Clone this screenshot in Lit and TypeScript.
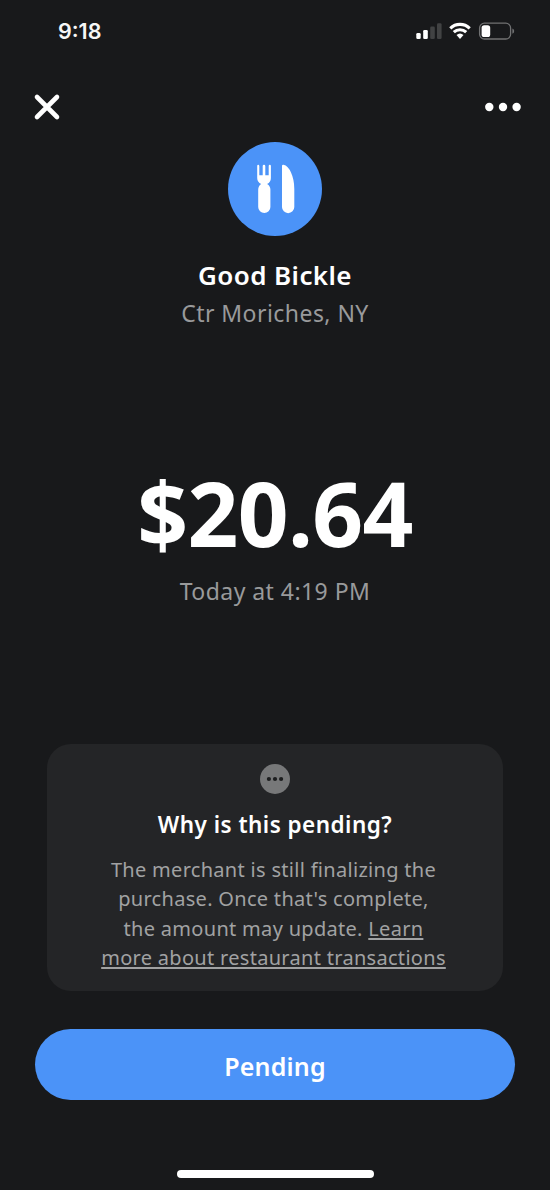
import { LitElement, html, css } from "lit";
import { customElement } from "lit/decorators.js";

@customElement("status-bar")
export class StatusBar extends LitElement {
  static styles = css`
    :host { display: flex; justify-content: space-between; height: 62px; box-sizing: border-box; padding: 19px 34px 0 58px; }
    .time { font: 600 21.5px/25px Inter, sans-serif; letter-spacing: 0; color: #f6f6f6; }
    .icons { display: block; width: 101px; height: 24px; }
  `;
  render() {
    return html`
      <span class="time">9:18</span>
      <svg class="icons" viewBox="0 0 101 24" fill="none">
        <rect x="1.3" y="14" width="4.4" height="6" rx="1.3" fill="#fff" />
        <rect x="8.2" y="11" width="4.6" height="9" rx="1.3" fill="#fff" />
        <rect x="15.2" y="7.6" width="4.6" height="12.4" rx="1.3" fill="#414243" />
        <rect x="22" y="4.2" width="4.6" height="15.8" rx="1.3" fill="#414243" />
        <g stroke="#fff" stroke-width="3.1">
          <path d="M35.3 9.3a14 14 0 0 1 19.400 0" />
          <path d="M38.800 13.200a9 9 0 0 1 12.400 0" />
        </g>
        <path d="M41.500 16a5.300 5.300 0 0 1 7 0l-3.500 4z" fill="#fff" />
        <rect x="64.600" y="4.200" width="31" height="15.800" rx="4.800" stroke="#717273" stroke-width="1.300" />
        <rect x="66.600" y="6.200" width="8.600" height="11.800" rx="2.600" fill="#fff" />
        <path d="M97.400 9.400q1.800.8 1.800 2.700t-1.800 2.700z" fill="#717273" />
      </svg>
    `;
  }
}

@customElement("pending-card")
export class PendingCard extends LitElement {
  static styles = css`
    :host { display: flex; flex-direction: column; align-items: center; box-sizing: border-box; height: 247px; padding-top: 20px; border-radius: 24px; background: #242527; text-align: center; }
    .badge { display: block; width: 30px; height: 30px; }
    .title { margin: 16px 0 0; font-size: 22.5px; line-height: 30px; font-weight: 600; letter-spacing: 0.47px; color: #fff; white-space: nowrap; }
    .copy { margin: 15px 0 0; padding-right: 3px; font-size: 20px; line-height: 29.3px; letter-spacing: 0.3px; color: #a1a2a3; white-space: nowrap; }
    .link { color: inherit; text-decoration: underline; text-decoration-thickness: 1.5px; text-underline-offset: 2px; text-decoration-skip-ink: none; }
  `;
  render() {
    return html`
      <svg class="badge" viewBox="0 0 30 30">
        <circle cx="15" cy="15" r="15" fill="#777879" />
        <g fill="#1c1d1e">
          <circle cx="8.9" cy="15" r="2.1" /><circle cx="15" cy="15" r="2.1" /><circle cx="21.1" cy="15" r="2.1" />
        </g>
      </svg>
      <h2 class="title">Why is this pending?</h2>
      <p class="copy">
        The merchant is still finalizing the<br />purchase. Once that's complete,<br />the amount may update.
        <a class="link">Learn<br />more about restaurant transactions</a>
      </p>
    `;
  }
}

@customElement("app-root")
export class AppRoot extends LitElement {
  static styles = css`
    :host { display: flex; flex-direction: column; width: 550px; height: 1190px; overflow: hidden; background: #18191b; font-family: "Noto Sans", sans-serif; }
    .nav { display: flex; justify-content: space-between; align-items: center; height: 80px; padding: 9px 28px 0 33px; box-sizing: border-box; }
    .nav svg { display: block; }
    .main { display: flex; flex-direction: column; align-items: center; white-space: nowrap; }
    .avatar { display: block; width: 94px; height: 94px; }
    .name { margin: 22px 0 0; font-size: 26px; line-height: 34px; font-weight: 600; letter-spacing: 0.4px; color: #fff; }
    .muted { font-size: 23px; line-height: 30px; color: #999a9b; letter-spacing: 0.45px; }
    .place { margin-top: 6px; }
    .amount { margin-top: 135px; font-size: 89px; line-height: 100px; font-weight: 700; letter-spacing: -0.7px; color: #fff; }
    .date { margin-top: 13px; }
    .card { margin: 138px 47px 0; }
    .button { margin: 38px 35px 0; height: 71px; padding: 2px 0 0; border: 0; border-radius: 36px; background: #4b93f8; color: #fff; font: 600 25px/34px "Noto Sans", sans-serif; letter-spacing: 0.2px; }
    .home { width: 197px; height: 8px; margin: 70px auto 0; border-radius: 4px; background: #fff; }
  `;
  render() {
    return html`
      <status-bar></status-bar>
      <div class="nav">
        <svg width="28" height="28" viewBox="0 0 28 28" stroke="#fff" stroke-width="4.6" stroke-linecap="round">
          <path d="M4 4l20 20M24 4L4 24" />
        </svg>
        <svg width="38" height="10" viewBox="0 0 38 10" fill="#fff">
          <circle cx="5.3" cy="5" r="4.2" /><circle cx="19" cy="5" r="4.2" /><circle cx="32.6" cy="5" r="4.2" />
        </svg>
      </div>
      <div class="main">
        <svg class="avatar" viewBox="0 0 94 94">
          <circle cx="47" cy="47" r="47" fill="#4b93f8" />
          <g fill="#fff">
            <path d="M29.2 24q0-1.200 1-1.200t1.100 1.200v9.300h3.400V24q0-1.200 1.300-1.200t1.300 1.200v9.300h3.400V24q0-1.200 1.100-1.200t1.100 1.200v12q0 4-3.800 6 3.300 2 3.300 5.600v17.400a6 6 0 0 1-12.200 0V47.600q0-3.600 3-5.600-4-2-4-6z" />
            <path d="M54 24q0-1.500 1.500-1.200 4.500.8 7.600 8 3.200 7 3.200 16.200v18a6.100 6.100 0 0 1-12.300 0z" />
          </g>
        </svg>
        <h1 class="name">Good Bickle</h1>
        <div class="muted place">Ctr Moriches, NY</div>
        <div class="amount">$20.64</div>
        <div class="muted date">Today at 4:19 PM</div>
      </div>
      <pending-card class="card"></pending-card>
      <button class="button">Pending</button>
      <div class="home"></div>
    `;
  }
}
